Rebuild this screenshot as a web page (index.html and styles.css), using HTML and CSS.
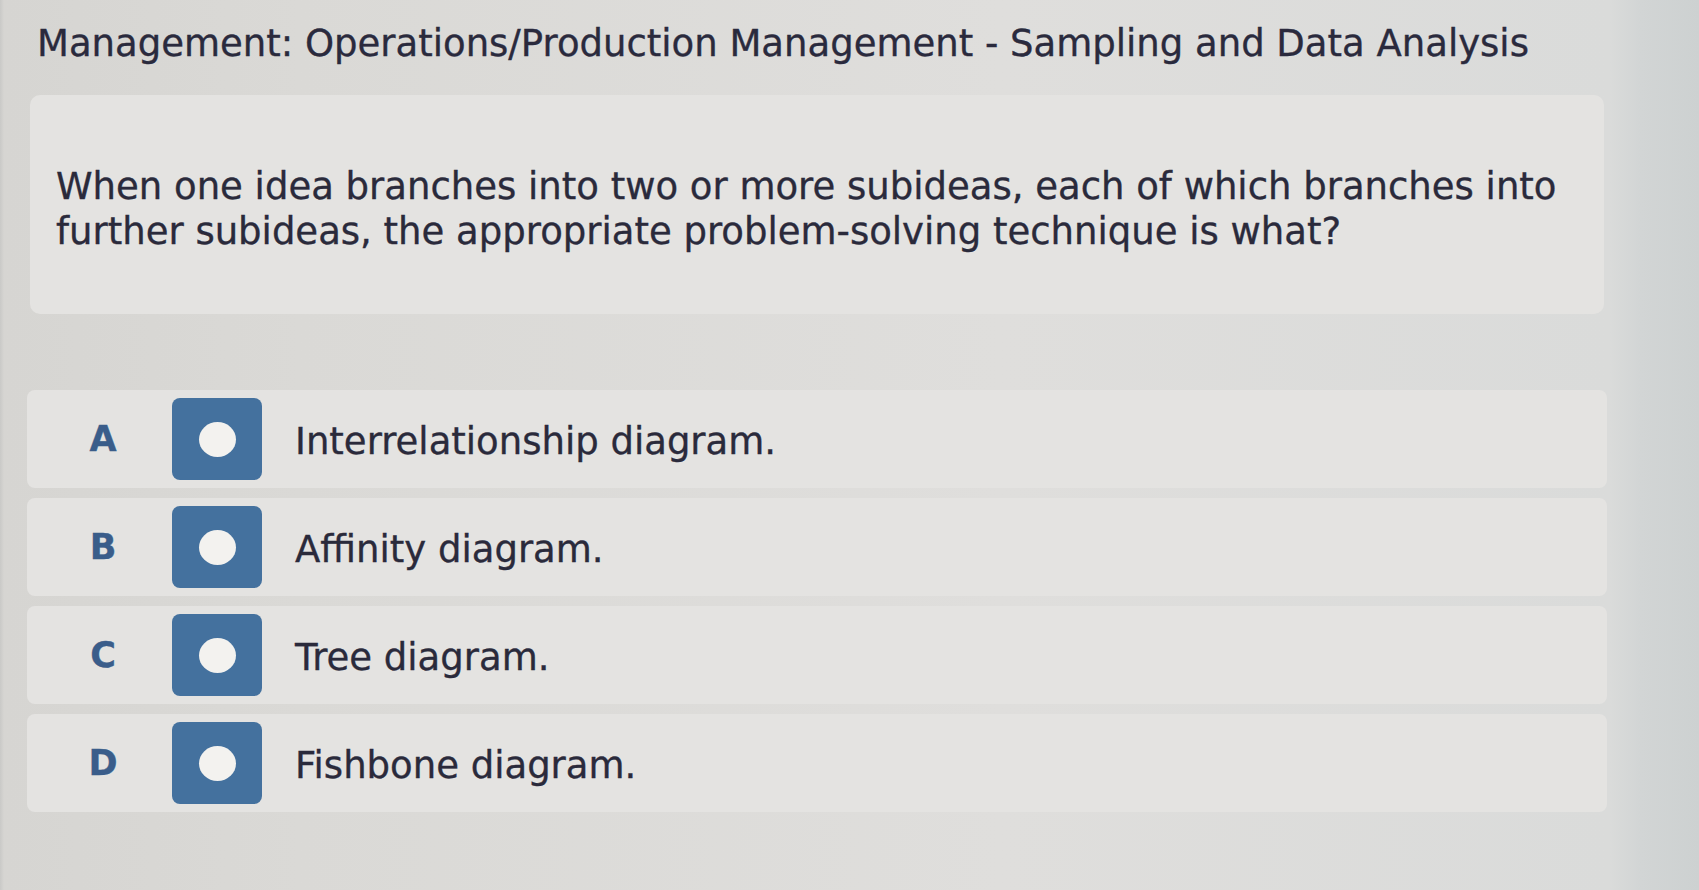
FILE: index.html
```html
<!DOCTYPE html>
<html lang="en">
<head>
<meta charset="utf-8">
<title>Sampling and Data Analysis</title>
<link rel="stylesheet" href="styles.css">
</head>
<body>
<div class="page">
  <h1 class="title">Management: Operations/Production Management - Sampling and Data Analysis</h1>
  <div class="question">
    <p class="question-text">When one idea branches into two or more subideas, each of which branches into further subideas, the appropriate problem-solving technique is what?</p>
  </div>
  <div class="options">
    <div class="option">
      <span class="letter">A</span>
      <span class="radio"><span class="dot"></span></span>
      <span class="answer">Interrelationship diagram.</span>
    </div>
    <div class="option">
      <span class="letter">B</span>
      <span class="radio"><span class="dot"></span></span>
      <span class="answer">Affinity diagram.</span>
    </div>
    <div class="option">
      <span class="letter">C</span>
      <span class="radio"><span class="dot"></span></span>
      <span class="answer">Tree diagram.</span>
    </div>
    <div class="option">
      <span class="letter">D</span>
      <span class="radio"><span class="dot"></span></span>
      <span class="answer">Fishbone diagram.</span>
    </div>
  </div>
</div>
</body>
</html>
```
FILE: styles.css
```css
html, body {
  margin: 0;
  padding: 0;
}
body {
  width: 1699px;
  height: 890px;
  overflow: hidden;
  font-family: "DejaVu Sans", Verdana, sans-serif;
  color: #2a2a3b;
  -webkit-text-stroke: 0.35px currentColor;
  background: linear-gradient(90deg, #c9c9c7 0px, #d6d5d2 4px, #dad9d6 300px, #dfdedc 1000px, #dadbda 1610px, #d2d5d5 1640px, #cdd1d1 1699px);
}
.page {
  display: flex;
  flex-direction: column;
}
.title {
  margin: 22px 0 0 37px;
  font-size: 37px;
  font-weight: normal;
  line-height: 44px;
  color: #2a2a3d;
  white-space: nowrap;
}
.question {
  margin: 29px 0 0 30px;
  width: 1574px;
  height: 219px;
  box-sizing: border-box;
  padding: 69px 30px 0 26px;
  background: #e4e3e1;
  border-radius: 10px;
}
.question-text {
  margin: 0;
  font-size: 37px;
  line-height: 45px;
}
.options {
  margin: 76px 0 0 27px;
  width: 1580px;
  display: flex;
  flex-direction: column;
  gap: 10px;
}
.option {
  height: 98px;
  display: flex;
  align-items: center;
  padding-left: 21px;
  background: #e4e3e1;
  border-radius: 8px;
}
.letter {
  width: 110px;
  text-align: center;
  font-size: 35px;
  font-weight: bold;
  color: #3a5d8a;
}
.radio {
  margin-left: 14px;
  width: 90px;
  height: 82px;
  border-radius: 8px;
  background: #44719e;
  display: flex;
  align-items: center;
  justify-content: center;
}
.dot {
  width: 37px;
  height: 35px;
  border-radius: 50%;
  background: #f3f2ef;
}
.answer {
  margin-left: 33px;
  margin-top: 4px;
  font-size: 37px;
  color: #2a2a3b;
}
```
